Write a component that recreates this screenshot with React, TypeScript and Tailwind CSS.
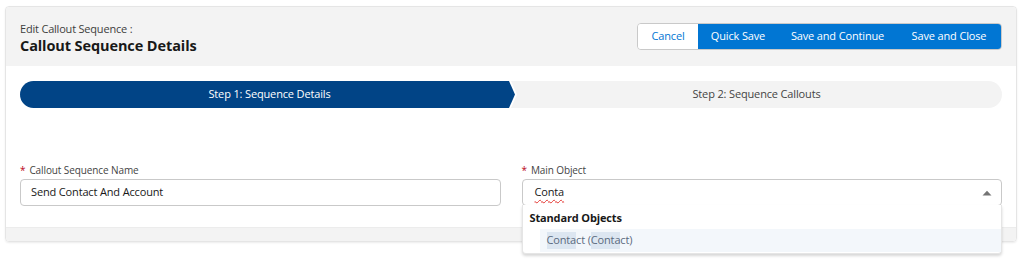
export default function App() {
  const font = { fontFamily: '"Open Sans", "Noto Sans", sans-serif' };
  return (
    <div className="h-[261px] w-[1024px] bg-white pl-[5px] pr-[7px] pt-[6px] text-[#181818]" style={font}>
      <div className="relative rounded-[4px] border border-[#e5e5e5] shadow-[0_1px_2px_rgba(0,0,0,0.08)]">
        {/* header */}
        <div className="flex h-[59px] items-center justify-between rounded-t-[4px] bg-[#f3f3f3] pl-[14px] pr-[14px]">
          <div className="pt-[2px]">
            <p className="text-[11px] leading-[15px] tracking-[-0.2px] text-[#3e3e3c]">Edit Callout Sequence :</p>
            <p className="text-[14.5px] font-bold leading-[19px] tracking-[-0.1px] text-[#181818]">
              Callout Sequence Details
            </p>
          </div>
          <div className="flex h-[27px] overflow-hidden rounded-[4px] border border-[#c9c9c9] text-[11px] tracking-[-0.15px]">
            <button type="button" className="w-[60px] bg-white text-[#0176d3]">
              Cancel
            </button>
            <button type="button" className="w-[80px] bg-[#0176d3] text-white">
              Quick Save
            </button>
            <button type="button" className="w-[119px] bg-[#0176d3] text-white">
              Save and Continue
            </button>
            <button type="button" className="w-[104px] bg-[#0176d3] text-white">
              Save and Close
            </button>
          </div>
        </div>

        {/* body */}
        <div className="bg-white px-[14px] pt-[15px] pb-[21px]">
          <div className="flex h-[27px] text-[11px] tracking-[-0.15px]">
            <div className="flex flex-1 items-center justify-center rounded-l-full bg-[#014486] pl-[4px] text-white [clip-path:polygon(0_0,calc(100%-6px)_0,100%_50%,calc(100%-6px)_100%,0_100%)]">
              Step 1: Sequence Details
            </div>
            <div className="-ml-[4px] flex flex-1 items-center justify-center rounded-r-full bg-[#f3f3f3] text-[#444444] [clip-path:polygon(0_0,100%_0,100%_100%,0_100%,6px_50%)]">
              Step 2: Sequence Callouts
            </div>
          </div>

          <div className="mt-[54px] grid grid-cols-2 gap-x-[21px]">
            <div>
              <label className="block text-[10px] leading-[16px] tracking-[-0.1px] text-[#444444]">
                <span className="mr-[4px] text-[#ba0517]">*</span>Callout Sequence Name
              </label>
              <div className="mt-[1px] flex h-[27px] items-center rounded-[4px] border border-[#c9c9c9] px-[10px] text-[11px] tracking-[-0.15px] text-[#181818]">
                Send Contact And Account
              </div>
            </div>
            <div className="relative">
              <label className="block text-[10px] leading-[16px] tracking-[-0.1px] text-[#444444]">
                <span className="mr-[4px] text-[#ba0517]">*</span>Main Object
              </label>
              <div className="mt-[1px] flex h-[27px] items-center justify-between rounded-[4px] border border-[#c9c9c9] px-[12px] text-[11px] tracking-[-0.15px] text-[#181818]">
                <span className="underline decoration-[#e3342f] decoration-wavy decoration-1 underline-offset-[3px]">
                  Conta
                </span>
                <svg width="10" height="6" viewBox="0 0 10 6" className="mr-[-3px]">
                  <path d="M0.5 5.5 L5 0.8 L9.5 5.5 Z" fill="#747474" />
                </svg>
              </div>
              {/* dropdown */}
              <div className="absolute left-0 right-0 top-[43px] z-10 rounded-b-[4px] border border-t-0 border-[#e5e5e5] bg-white pb-[1px] shadow-[0_2px_3px_rgba(0,0,0,0.16)]">
                <div className="px-[7px] pt-[4px] text-[11px] font-bold leading-[17px] tracking-[-0.15px] text-[#181818]">
                  Standard Objects
                </div>
                <div className="ml-[17px] mt-[3px] flex h-[23px] items-center bg-[#f3f7fb] pl-[7px] text-[11px] tracking-[-0.15px] text-[#5a6a7e]">
                  <span className="bg-[#dce6f1]">Conta</span>ct (<span className="bg-[#dce6f1]">Conta</span>ct)
                </div>
              </div>
            </div>
          </div>
        </div>

        {/* footer */}
        <div className="h-[14px] rounded-b-[4px] border-t border-[#ececec] bg-[#f3f3f3]" />
      </div>
    </div>
  );
}
